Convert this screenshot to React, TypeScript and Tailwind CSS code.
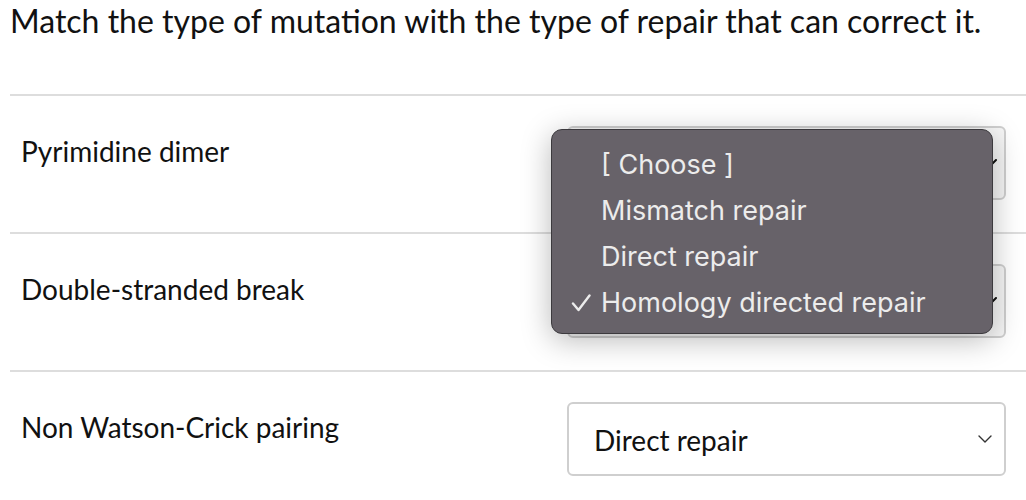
import React from 'react'

const rows = [
  { label: 'Pyrimidine dimer', value: '', open: true },
  { label: 'Double-stranded break', value: '', open: true },
  { label: 'Non Watson-Crick pairing', value: 'Direct repair', open: false },
]

const options = ['[ Choose ]', 'Mismatch repair', 'Direct repair', 'Homology directed repair']

function Chevron({ heavy }: { heavy?: boolean }) {
  return (
    <svg width="14" height="8" viewBox="0 0 14 8" fill="none">
      <path
        d="M1 1 L7 7 L13 1"
        stroke={heavy ? '#111' : '#333'}
        strokeWidth={heavy ? 2 : 1.4}
        strokeLinecap="round"
        strokeLinejoin="round"
      />
    </svg>
  )
}

function SelectBox({ value, open }: { value: string; open: boolean }) {
  return (
    <div
      className={
        open
          ? 'w-[439px] h-[74px] rounded-[6px] border-2 border-[#cfcfcf] bg-[#f6f6f6] flex items-center justify-between pl-[25px] pr-[7px]'
          : 'w-[439px] h-[74px] rounded-[6px] border-2 border-[#cfcfcf] bg-white flex items-center justify-between pl-[25px] pr-[12px]'
      }
    >
      <span className="text-[28px] pt-[2px] text-[#111]">{value}</span>
      <Chevron heavy={open} />
    </div>
  )
}

export default function App() {
  return (
    <div className="relative w-[1026px] h-[500px] bg-white overflow-hidden font-['Lato',sans-serif] text-[#111]">
      <h1 className="pl-[10px] pt-[2px] h-[94px] text-[32px] leading-[38px]">
        Match the type of mutation with the type of repair that can correct it.
      </h1>
      <div className="ml-[10px]">
        {rows.map((r) => (
          <div key={r.label} className="flex justify-between border-t-2 border-[#dddddd] h-[138px] pt-[30px] pl-[11px] pr-[20px]">
            <div className="text-[28px] leading-[36px] pt-[7px]">{r.label}</div>
            <SelectBox value={r.value} open={r.open} />
          </div>
        ))}
      </div>

      <div className="absolute left-[551px] top-[129px] w-[442px] h-[205px] rounded-[11px] border border-[#3c3a3e] bg-[#676269] shadow-[0_6px_30px_rgba(0,0,0,0.28)] pt-[12px] font-['Inter',sans-serif] text-[#ececec]">
        {options.map((o, i) => (
          <div key={o} className="flex items-center h-[46px] text-[27px]">
            <span className="w-[49px] pl-[19px] flex items-center">
              {i === 3 && (
                <svg width="20" height="18" viewBox="0 0 20 18" fill="none">
                  <path d="M2 9.5 L7.5 16 L18.5 1.5" stroke="#ececec" strokeWidth="2.4" strokeLinecap="round" strokeLinejoin="round" />
                </svg>
              )}
            </span>
            <span>{o}</span>
          </div>
        ))}
      </div>
    </div>
  )
}
